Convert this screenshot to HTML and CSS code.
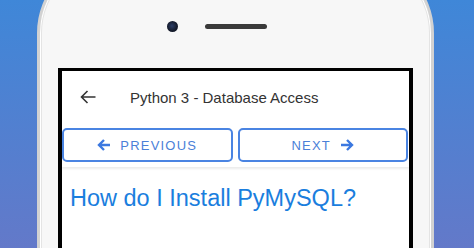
FILE: index.html
```html
<!DOCTYPE html>
<html lang="en">
<head>
    <meta charset="UTF-8">
    <meta name="viewport" content="width=device-width, initial-scale=1.0">
    <title>Python 3 - Database Access</title>
    <link rel="stylesheet" href="styles.css">
</head>
<body>
    <!-- Marco del teléfono -->
    <div class="phone">
        <div class="phone-top">
            <span class="camera"></span>
            <span class="speaker"></span>
        </div>

        <!-- Pantalla -->
        <div class="screen">
            <header class="app-bar">
                <svg class="back" width="16" height="14" viewBox="0 0 16 14">
                    <path d="M15.5 7H1.5M7.5 1L1.5 7l6 6" fill="none" stroke="#333" stroke-width="1.6"/>
                </svg>
                <h1>Python 3 - Database Access</h1>
            </header>

            <nav class="pager">
                <button class="btn-nav">
                    <svg width="14" height="12" viewBox="0 0 14 12">
                        <path d="M13 6H2M7 1L2 6l5 5" fill="none" stroke="#3b78e0" stroke-width="2.4"/>
                    </svg>
                    Previous
                </button>
                <button class="btn-nav">
                    Next
                    <svg width="14" height="12" viewBox="0 0 14 12">
                        <path d="M1 6h11M7 1l5 5-5 5" fill="none" stroke="#3b78e0" stroke-width="2.4"/>
                    </svg>
                </button>
            </nav>

            <h2 class="question">How do I Install PyMySQL?</h2>
        </div>
    </div>
</body>
</html>
```

FILE: styles.css
```css
/* Fondo general */
body {
    margin: 0;
    height: 248px;
    overflow: hidden;
    background: linear-gradient(to bottom, #3f87d8, #6379c9);
    font-family: 'Liberation Sans', Arial, sans-serif;
}

.phone {
    box-sizing: border-box;
    width: 397px;
    height: 420px;
    margin: -45px 0 0 37px;
    background-color: #f7f7f7;
    border: 3px solid #d2d2d2;
    border-radius: 78px;
    box-shadow: inset 0 0 0 1px #fff, inset 0 0 0 2px #e4e4e4;
}

.phone-top {
    display: flex;
    align-items: center;
    justify-content: center;
    height: 11px;
    margin-top: 63px;
    position: relative;
}

.camera {
    position: absolute;
    left: 127px;
    width: 11px;
    height: 11px;
    border-radius: 50%;
    background: radial-gradient(circle at 45% 45%, #2c3e66 0, #141a2a 60%);
}

.speaker {
    width: 62px;
    height: 5px;
    margin-left: 1px;
    border-radius: 3px;
    background-color: #3a3a3a;
}

.screen {
    box-sizing: border-box;
    width: 355px;
    height: 300px;
    margin: 36px 0 0 18px;
    background: #fff;
    border: 4px solid #000;
    border-bottom: none;
    border-top-width: 3px;
}

.app-bar {
    display: flex;
    align-items: center;
    height: 52px;
    padding-left: 18px;
}

.app-bar h1 {
    margin: 0 0 0 34px;
    font-size: 15px;
    font-weight: normal;
    color: #333;
}

.pager {
    display: flex;
    gap: 5px;
    padding: 5px 1px 5px 0;
    box-shadow: 0 2px 2px rgba(0, 0, 0, 0.08);
}

.btn-nav {
    flex: 1;
    display: flex;
    align-items: center;
    justify-content: center;
    gap: 9px;
    height: 34px;
    padding: 0;
    background: #fff;
    border: 2px solid #4a84e2;
    border-radius: 5px;
    color: #4a80d8;
    font-family: inherit;
    font-size: 13px;
    letter-spacing: 1.2px;
    text-transform: uppercase;
}

.question {
    margin: 18px 0 0 8px;
    font-size: 23.5px;
    font-weight: normal;
    color: #1a7ede;
}
```
